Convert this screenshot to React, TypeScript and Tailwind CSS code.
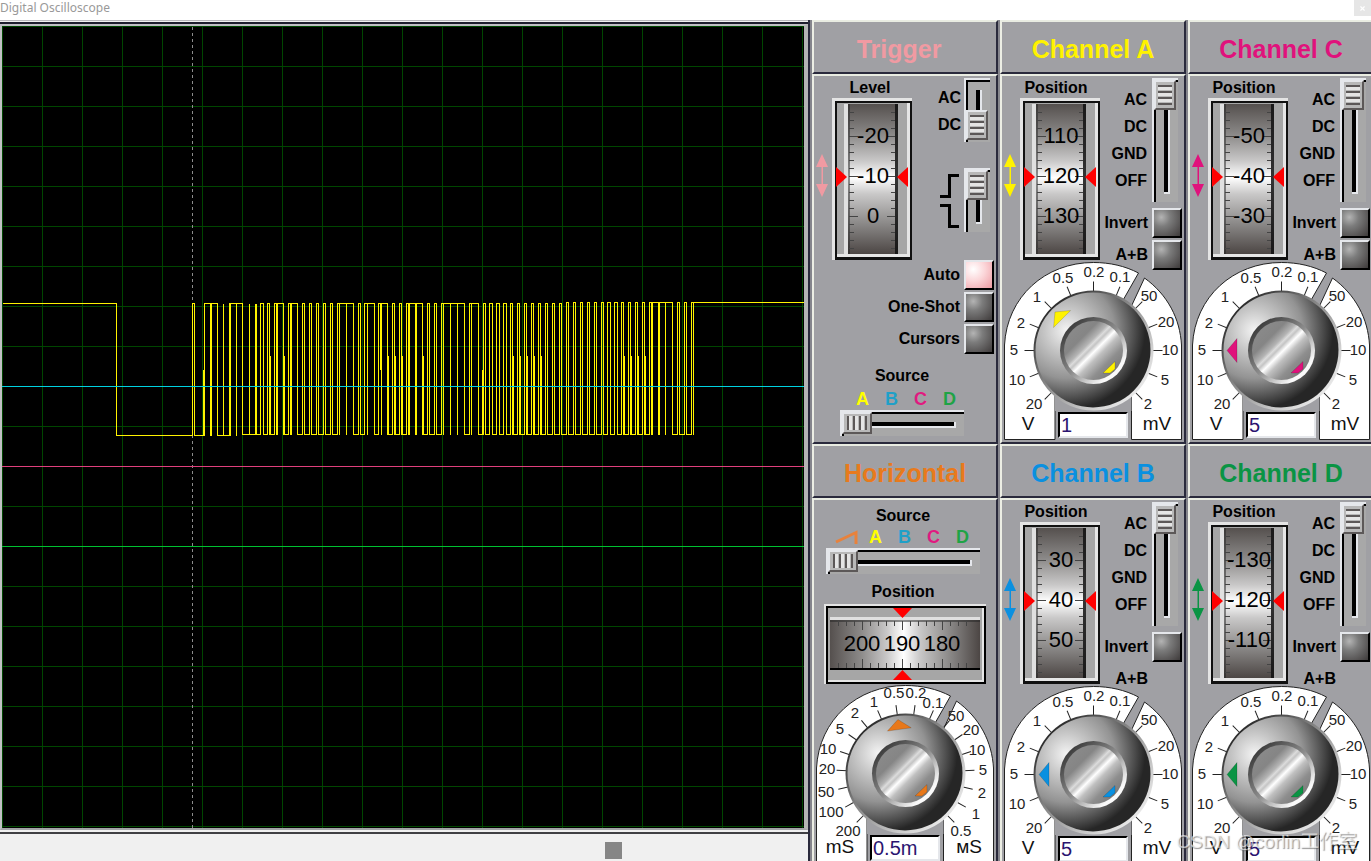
import { useState } from 'react';
import { X } from 'lucide-react';

const font = "font-['Liberation_Sans',Arial,sans-serif]";

/* ---------- Screen ---------- */

// high sections of the channel A trace, [from, to]
const PULSES: [number, number][] = [
  [192, 194], [204, 217], [229, 242], [260, 263], [267, 269], [274, 283], [288, 297],
  [302, 304], [309, 311], [316, 318], [323, 325], [330, 332], [337, 353], [358, 360],
  [364, 374], [378, 387], [392, 394], [399, 401], [406, 422], [427, 429], [434, 436],
  [441, 464], [469, 478], [483, 485], [489, 492], [496, 499], [503, 506], [510, 512],
  [517, 519], [524, 526], [531, 533], [538, 540], [545, 547], [552, 554], [559, 561],
  [566, 568], [573, 575], [580, 582], [587, 589], [594, 596], [601, 603], [607, 610],
  [614, 617], [621, 623], [628, 630], [635, 637], [642, 644], [649, 672], [677, 679],
  [684, 686], [691, 804],
];
const EDGES = [
  210, 211, 223, 230, 236, 249, 255, 256, 276, 277, 290, 291, 339, 346, 367, 381, 408, 409,
  415, 416, 443, 450, 457, 471, 651, 652, 658, 659, 665, 693,
];
const SPIKES = [270, 284, 388, 395, 402, 423, 513, 520, 527, 534, 541, 624, 631, 638, 645];

const high = (x: number) => (x < 561 ? 303 : 302);
const low = (x: number) => (x < 242 ? 435 : 434);

const TRACE = [
  'M2 303H116V435',
  ...PULSES.map(([a, b]) => `H${a}V${high(a)}H${b}${b < 804 ? `V${low(b)}` : ''}`),
  ...EDGES.map((x) => `M${x} ${high(x)}V${low(x)}`),
  ...SPIKES.map((x) => `M${x} 355V434`),
  'M203 369V435M380 303V369M482 369V434',
].join('');

const GRID = Array.from({ length: 21 }, (_, i) => i * 40);

function Screen() {
  return (
    <svg viewBox="1.5 25.5 802 802" className="block w-full bg-black" shapeRendering="crispEdges" fill="none">
      <g stroke="#004600">
        {GRID.map((n) => (
          <path key={n} d={`M${n + 2} 25V829M1 ${n + 26}H805`} />
        ))}
      </g>
      <path d="M192 26V828" stroke="#8c8c8c" strokeDasharray="3 3" />
      <path d={TRACE} stroke="#fff200" />
      <path d="M1 386H805" stroke="#00d2e0" />
      <path d="M1 466H805" stroke="#e0407c" />
      <path d="M1 546H805" stroke="#00c030" />
    </svg>
  );
}

/* ---------- Shared gradients ---------- */

function Gradients() {
  const wheel = (
    <>
      <stop offset="0" stopColor="#55504e" />
      <stop offset="0.2" stopColor="#8a8887" />
      <stop offset="0.38" stopColor="#c9c8c8" />
      <stop offset="0.49" stopColor="#ffffff" />
      <stop offset="0.6" stopColor="#c9c8c8" />
      <stop offset="0.8" stopColor="#8a8887" />
      <stop offset="1" stopColor="#4c4644" />
    </>
  );
  return (
    <svg width="0" height="0" className="absolute" aria-hidden="true">
      <defs>
        <linearGradient id="wheelV" x1="0" y1="0" x2="0" y2="1">{wheel}</linearGradient>
        <linearGradient id="wheelH" x1="0" y1="0" x2="1" y2="0">{wheel}</linearGradient>
        <linearGradient id="rim" x1="0.1" y1="0.1" x2="0.9" y2="0.9">
          <stop offset="0" stopColor="#1c1c1c" />
          <stop offset="0.35" stopColor="#777" />
          <stop offset="0.75" stopColor="#c8c8c8" />
          <stop offset="1" stopColor="#f2f2f2" />
        </linearGradient>
        <radialGradient id="body" cx="0.27" cy="0.33" r="0.76">
          <stop offset="0" stopColor="#f4f4f4" />
          <stop offset="0.25" stopColor="#c6c6c6" />
          <stop offset="0.55" stopColor="#939393" />
          <stop offset="0.78" stopColor="#4c4c4c" />
          <stop offset="0.9" stopColor="#262626" />
        </radialGradient>
        <linearGradient id="ring" x1="0.12" y1="0.12" x2="0.88" y2="0.88">
          <stop offset="0" stopColor="#383838" />
          <stop offset="0.5" stopColor="#8c8c8c" />
          <stop offset="0.9" stopColor="#fafafa" />
        </linearGradient>
        <linearGradient id="face" x1="0.12" y1="0.14" x2="0.86" y2="0.88">
          <stop offset="0" stopColor="#8a8a8a" />
          <stop offset="0.22" stopColor="#858585" />
          <stop offset="0.36" stopColor="#b4b4b4" />
          <stop offset="0.41" stopColor="#dcdcdc" />
          <stop offset="0.45" stopColor="#c4c4c4" />
          <stop offset="0.52" stopColor="#ffffff" />
          <stop offset="0.62" stopColor="#c0c0c0" />
          <stop offset="0.8" stopColor="#8e8e8e" />
          <stop offset="1" stopColor="#7a7a7a" />
        </linearGradient>
      </defs>
    </svg>
  );
}

/* ---------- Wheels ---------- */

function VerticalWheel({ values }: { values: string[] }) {
  const ticks = Array.from({ length: 18 }, (_, i) => 14 + i * 8);
  return (
    <svg width="80" height="162" viewBox="0 0 80 162" className={`block font-normal ${font}`}>
      <rect width="80" height="162" fill="#e4e4e4" />
      <path d="M3 162V3H80V162Z" fill="#111" />
      <path d="M5 5H78V159H5Z" fill="#e6e6e6" />
      <path d="M5 5H75V156H5Z" fill="#a6a6a6" />
      <rect x="12" y="6" width="4" height="150" fill="#e0e0e0" />
      <rect x="16" y="6" width="50" height="150" fill="url(#wheelV)" />
      <rect x="16" y="6" width="2" height="150" fill="#222" opacity="0.5" />
      <rect x="63" y="6" width="3" height="150" fill="#111" opacity="0.85" />
      <path
        d={ticks.map((y) => ((y - 38) % 40 === 0 ? `M17 ${y}.5H26M55 ${y}.5H63` : `M17 ${y}.5H22M59 ${y}.5H63`)).join('')}
        stroke="#444"
        strokeWidth="1"
      />
      <path d="M4 69L15 79L4 89Z" fill="#f00" />
      <path d="M76 69L65 79L76 89Z" fill="#f00" />
      {values.map((v, i) => (
        <text key={v} x="41" y={45 + i * 40} textAnchor="middle" fontSize="22">{v}</text>
      ))}
    </svg>
  );
}

function HorizontalWheel({ values }: { values: string[] }) {
  const ticks = Array.from({ length: 17 }, (_, i) => 14 + i * 8);
  return (
    <svg width="162" height="80" viewBox="0 0 162 80" className={`ml-[10px] block font-normal ${font}`}>
      <rect width="162" height="80" fill="#e4e4e4" />
      <path d="M2 2H162V80H2Z" fill="#000" />
      <path d="M4 4H160V78H4Z" fill="#e6e6e6" />
      <path d="M4 4H158V76H4Z" fill="#a6a6a6" />
      <rect x="6" y="13" width="150" height="3" fill="#e0e0e0" />
      <rect x="6" y="16" width="150" height="48" fill="url(#wheelH)" />
      <rect x="6" y="16" width="150" height="2" fill="#222" opacity="0.5" />
      <rect x="6" y="64" width="150" height="2" fill="#000" />
      <path
        d={ticks.map((x) => ((x - 38) % 40 === 0 ? `M${x}.5 17V26M${x}.5 55V64` : `M${x}.5 17V22M${x}.5 59V64`)).join('')}
        stroke="#444"
      />
      <path d="M69 4H88L78.500 14Z" fill="#f00" />
      <path d="M69 76H88L78.500 66Z" fill="#f00" />
      {values.map((v, i) => (
        <text key={v} x={38 + i * 40} y="47" textAnchor="middle" fontSize="22">{v}</text>
      ))}
    </svg>
  );
}

/* ---------- Rotary knob ---------- */

interface Mark {
  text: string;
  x: number;
  y: number;
}

const VOLT_MARKS: Mark[] = [
  { text: '20', x: 31, y: 143 }, { text: '10', x: 14, y: 119 }, { text: '5', x: 11, y: 89 },
  { text: '2', x: 18, y: 62 }, { text: '1', x: 34, y: 36 }, { text: '0.5', x: 60, y: 17 },
  { text: '0.2', x: 91, y: 11 }, { text: '0.1', x: 117, y: 16 }, { text: '50', x: 146, y: 35 },
  { text: '20', x: 163, y: 61 }, { text: '10', x: 167, y: 89 }, { text: '5', x: 162, y: 119 },
  { text: '2', x: 145, y: 143 },
];

const TIME_MARKS: Mark[] = [
  { text: '200', x: 33, y: 147 }, { text: '100', x: 16, y: 128 }, { text: '50', x: 11, y: 108 },
  { text: '20', x: 12, y: 85 }, { text: '10', x: 13, y: 65 }, { text: '5', x: 25, y: 45 },
  { text: '2', x: 40, y: 29 }, { text: '1', x: 59, y: 18 }, { text: '0.5', x: 79, y: 9 },
  { text: '0.2', x: 101, y: 9 }, { text: '0.1', x: 118, y: 19 }, { text: '50', x: 141, y: 32 },
  { text: '20', x: 156, y: 46 }, { text: '10', x: 162, y: 66 }, { text: '5', x: 168, y: 86 },
  { text: '2', x: 167, y: 109 }, { text: '1', x: 161, y: 130 }, { text: '0.5', x: 146, y: 147 },
];

interface KnobProps {
  label: string;
  marks: Mark[];
  units: [string, string];
  angle: number;
  color: string;
  value: string;
}

function Knob({ label, marks, units, angle, color, value }: KnobProps) {
  const [text, setText] = useState(value);
  const steps = marks.length === 13 ? 12 : marks.length - 1;
  return (
    <div className="relative ml-px h-[180px] w-[180px] font-normal">
      <svg width="180" height="180" viewBox="0 0 180 180" className={`block ${font}`}>
        <path
          d="M1.500 178.500V84C4 36 42 1.500 90.500 1.500C107 1.500 122 5 135.500 12L119 41L128 46L141.500 17C165 34 177 58 178.500 84V178.500H128.500V120H52V178.500Z"
          fill="#fff"
          stroke="#222"
        />
        {marks.map((m, i) => (
          <path key={i} d="M58 0H69" stroke="#222" transform={`translate(90.500 89.500) rotate(${135 + (i * 270) / steps})`} />
        ))}
        <path d="M52 120H128.500V150H52Z" fill="#a0a0a4" />
        <circle cx="90.500" cy="89.500" r="60" fill="url(#rim)" />
        <circle cx="90" cy="89" r="57.500" fill="url(#body)" />
        <circle cx="90.500" cy="89.500" r="33.500" fill="url(#ring)" />
        <circle cx="90.500" cy="89.500" r="29.500" fill="url(#face)" />
        <g fill={color} stroke="#000" strokeOpacity="0.3" strokeWidth="0.500">
          <path d="M54.500 0L44.500 -12V12Z" transform={`translate(90.500 89.500) rotate(${angle})`} />
          <path d="M100 112L112 100.500V108L107 112Z" />
        </g>
        <g fontSize="15" fill="#222" textAnchor="middle">
          {marks.map((m, i) => (
            <text key={i} x={m.x} y={m.y + 5}>{m.text}</text>
          ))}
        </g>
        <g fontSize="19" fill="#111" textAnchor="middle">
          <text x="25" y="169">{units[0]}</text>
          <text x="154" y="169">{units[1]}</text>
        </g>
      </svg>
      <input
        type="text"
        aria-label={label}
        value={text}
        onChange={(e) => setText(e.target.value)}
        className="absolute top-[151px] left-[55px] h-[26px] w-[70px] border-t-2 border-r-2 border-b-2 border-l-2 border-t-black border-r-gray-200 border-b-gray-200 border-l-black bg-white pl-px text-[20px] leading-5 text-[#2b1470] outline-none"
      />
    </div>
  );
}

/* ---------- Switches and buttons ---------- */

interface SliderProps {
  label: string;
  max: number;
  start?: number;
  size: string;
}

function VerticalSlider({ label, max, start = 0, size }: SliderProps) {
  const [value, setValue] = useState(start);
  return (
    <div className={`relative w-[26px] shrink-0 border-t-2 border-l-2 border-gray-200 bg-[#a8a8a8] shadow-[inset_2px_2px_0_#000] ${size}`}>
      <span className="absolute top-[10px] bottom-2 left-[10px] w-[6px] border-r-2 border-b-2 border-gray-200 bg-black" />
      <input
        type="range"
        aria-label={label}
        min={0}
        max={max}
        value={value}
        onChange={(e) => setValue(Number(e.target.value))}
        className="absolute top-0 bottom-[2px] left-0 m-0 w-[22px] appearance-none bg-transparent outline-none [writing-mode:vertical-lr] [&::-webkit-slider-thumb]:h-[30px] [&::-webkit-slider-thumb]:w-[22px] [&::-webkit-slider-thumb]:appearance-none [&::-webkit-slider-thumb]:border-2 [&::-webkit-slider-thumb]:border-t-gray-200 [&::-webkit-slider-thumb]:border-r-[#5c5858] [&::-webkit-slider-thumb]:border-b-[#5c5858] [&::-webkit-slider-thumb]:border-l-gray-200 [&::-webkit-slider-thumb]:bg-[#b8b8b8] [&::-webkit-slider-thumb]:bg-[repeating-linear-gradient(180deg,#5c5858_0_2px,#e5e5e5_2px_5px,#b8b8b8_5px_6px)] [&::-webkit-slider-thumb]:bg-[length:14px_20px] [&::-webkit-slider-thumb]:bg-center [&::-webkit-slider-thumb]:bg-no-repeat"
      />
    </div>
  );
}

function HorizontalSlider({ label, max, start = 0, size }: SliderProps) {
  const [value, setValue] = useState(start);
  return (
    <div className={`relative h-[26px] border-t-2 border-l-2 border-gray-200 bg-[#a8a8a8] shadow-[inset_2px_2px_0_#000] ${size}`}>
      <span className="absolute top-[10px] right-2 left-[10px] h-[6px] border-r-2 border-b-2 border-gray-200 bg-black" />
      <input
        type="range"
        aria-label={label}
        min={0}
        max={max}
        value={value}
        onChange={(e) => setValue(Number(e.target.value))}
        className="absolute top-0 left-0 m-0 h-[22px] w-full appearance-none bg-transparent outline-none [&::-webkit-slider-thumb]:h-[22px] [&::-webkit-slider-thumb]:w-[30px] [&::-webkit-slider-thumb]:appearance-none [&::-webkit-slider-thumb]:border-2 [&::-webkit-slider-thumb]:border-t-gray-200 [&::-webkit-slider-thumb]:border-r-[#5c5858] [&::-webkit-slider-thumb]:border-b-[#5c5858] [&::-webkit-slider-thumb]:border-l-gray-200 [&::-webkit-slider-thumb]:bg-[#b8b8b8] [&::-webkit-slider-thumb]:bg-[repeating-linear-gradient(90deg,#5c5858_0_2px,#e5e5e5_2px_5px,#b8b8b8_5px_6px)] [&::-webkit-slider-thumb]:bg-[length:20px_14px] [&::-webkit-slider-thumb]:bg-center [&::-webkit-slider-thumb]:bg-no-repeat"
      />
    </div>
  );
}

function LampButton({ id, label, lit = false }: { id: string; label: string; lit?: boolean }) {
  const [on, setOn] = useState(lit);
  return (
    <div className="flex items-center gap-1">
      <label htmlFor={id}>{label}</label>
      <button
        id={id}
        type="button"
        aria-pressed={on}
        onClick={() => setOn(!on)}
        className={`h-[30px] w-[30px] border-2 border-t-gray-200 border-r-black border-b-black border-l-gray-200 ${
          on
            ? 'bg-[radial-gradient(circle_at_28%_28%,#fff,#fbd5d8_45%,#ee9aa2)]'
            : 'bg-[radial-gradient(circle_at_28%_28%,#b4b4b4,#7c7c7c_35%,#3e3a3a)]'
        }`}
      />
    </div>
  );
}

function UpDownArrow({ color }: { color: string }) {
  return (
    <svg width="14" height="44" viewBox="0 0 14 44" className="mt-[76px] mr-1 block shrink-0" fill={color}>
      <path d="M8 0L14 13H2ZM8 43L2 30H14ZM7.500 12H9V31H7.500Z" />
    </svg>
  );
}

function SourceLetters() {
  return (
    <>
      <span className="w-[29px] text-center text-[#ffff00]">A</span>
      <span className="w-[29px] text-center text-[#1fa0c8]">B</span>
      <span className="w-[29px] text-center text-[#e01a80]">C</span>
      <span className="w-[29px] text-center text-[#1fa346]">D</span>
    </>
  );
}

/* ---------- Panels ---------- */

interface PanelProps {
  title: string;
  color: string;
  children: React.ReactNode;
}

const frame = 'border-2 border-t-[#e9ece2] border-r-[#2a2a3c] border-b-[#2a2a3c] border-l-[#eceee4] bg-[#a0a0a4]';

function Panel({ title, color, children }: PanelProps) {
  return (
    <section className="pl-[2px]">
      <h2 className={`flex h-[54px] items-center justify-center pt-1 text-[25px] leading-8 font-bold ${frame} ${color}`}>{title}</h2>
      <div className={`h-[370px] text-[16px] leading-5 font-bold text-black ${frame}`}>{children}</div>
    </section>
  );
}

function TriggerPanel() {
  return (
    <Panel title="Trigger" color="pr-3 text-[#f09aa2]">
      <div className="flex items-start pt-[2px]">
        <UpDownArrow color="#f09aa2" />
        <div>
          <p className="pr-1 text-center">Level</p>
          <VerticalWheel values={['-20', '-10', '0']} />
        </div>
        <div className="flex flex-1 flex-col items-end gap-[26px] pr-[6px]">
          <div className="flex gap-[3px]">
            <div className="pt-[6px] text-right leading-[27px]">
              <p>AC</p>
              <p>DC</p>
            </div>
            <VerticalSlider label="Trigger coupling" max={1} start={1} size="h-16" />
          </div>
          <div className="flex items-center gap-[5px]">
            <svg width="19" height="56" viewBox="0 0 19 56" fill="none" stroke="#000" strokeWidth="3">
              <path d="M0 24.500H9.500V3.500H19M0 33.500H9.500V54.500H19" />
            </svg>
            <VerticalSlider label="Trigger edge" max={1} size="h-16" />
          </div>
        </div>
      </div>
      <div className="flex flex-col items-end gap-[2px] pr-[2px]">
        <LampButton id="auto" label="Auto" lit />
        <LampButton id="one-shot" label="One-Shot" />
        <LampButton id="cursors" label="Cursors" />
      </div>
      <div className="mt-3 ml-[26px] w-[124px]">
        <p className="text-center">Source</p>
        <div className="flex pt-[2px] pl-2 text-[18px] leading-[22px]">
          <SourceLetters />
        </div>
        <HorizontalSlider label="Trigger source" max={3} size="w-full" />
      </div>
    </Panel>
  );
}

function HorizontalPanel() {
  return (
    <Panel title="Horizontal" color="text-[#e87a1c]">
      <div className="ml-3 w-[154px] pt-[6px]">
        <p className="text-center">Source</p>
        <div className="flex items-center pl-[6px] text-[18px] leading-[22px]">
          <svg width="29" height="14" viewBox="0 0 29 14" fill="none" stroke="#e8823c" strokeWidth="3">
            <path d="M4 12L24 2.500V14" />
          </svg>
          <SourceLetters />
        </div>
        <HorizontalSlider label="Horizontal source" max={4} size="w-full" />
        <p className="mt-2 mb-[2px] text-center">Position</p>
      </div>
      <HorizontalWheel values={['200', '190', '180']} />
      <Knob label="Time per division" marks={TIME_MARKS} units={['mS', 'мS']} angle={262} color="#e8781a" value="0.5m" />
    </Panel>
  );
}

interface ChannelProps {
  name: string;
  title: string;
  ink: string;
  values: string[];
  angle: number;
  gain: string;
  sum?: boolean;
}

function ChannelPanel({ name, title, ink, values, angle, gain, sum = false }: ChannelProps) {
  return (
    <Panel title={`Channel ${name}`} color={title}>
      <div className="flex items-start pt-[2px]">
        <UpDownArrow color={ink} />
        <div>
          <p className="pr-2 text-center">Position</p>
          <VerticalWheel values={values} />
        </div>
        <div className="flex flex-1 flex-col items-end pr-[2px]">
          <div className="mr-1 mb-[6px] flex gap-[5px]">
            <div className="pt-2 text-right leading-[27px]">
              <p>AC</p>
              <p>DC</p>
              <p>GND</p>
              <p>OFF</p>
            </div>
            <VerticalSlider label={`Channel ${name} coupling`} max={3} size="h-[124px]" />
          </div>
          <LampButton id={`invert-${name}`} label="Invert" />
          <div className="mt-[2px] flex h-[30px] items-center">
            {sum ? <LampButton id={`sum-${name}`} label="A+B" /> : <span className="pr-[34px]">A+B</span>}
          </div>
        </div>
      </div>
      <div className="-mt-[9px]">
        <Knob label={`Channel ${name} gain`} marks={VOLT_MARKS} units={['V', 'mV']} angle={angle} color={ink} value={gain} />
      </div>
    </Panel>
  );
}

export default function App() {
  return (
    <div className={`relative flex h-screen flex-col overflow-hidden bg-white ${font}`}>
      <Gradients />
      <header className="flex h-5 shrink-0 items-start justify-between">
        <h1 className="font-['Noto_Sans',sans-serif] text-[12px] leading-4 text-[#999]">Digital Oscilloscope</h1>
        <button type="button" aria-label="Close" className="flex h-4 w-[17px] items-center justify-center bg-[#e6e6e6] text-white">
          <X size={7} strokeWidth={4} />
        </button>
      </header>

      <main className="flex min-h-0 flex-1">
        <div className="flex min-w-0 flex-1 flex-col border-r-2 border-[#2a2a3c] bg-[#f0f0f0]">
          <div className="border-t border-[#b8b8bc] pt-px">
            <div className="border-t-2 border-b-2 border-t-[#1e1e2e] border-b-[#404044] pb-[2px]">
              <div className="border-2 border-r-4 border-t-[#c0c0c4] border-r-[#b4b4b4] border-b-[#a4a4a8] border-l-[#c0c0c4]">
                <Screen />
              </div>
            </div>
          </div>
          <div className="mt-2 ml-[605px] h-[17px] w-[17px] bg-[#868686]" />
        </div>

        <aside className="w-[561px] shrink-0 overflow-hidden bg-[#85858c]">
          <div className="grid w-[564px] grid-cols-3">
            <TriggerPanel />
            <ChannelPanel name="A" title="text-[#fff200]" ink="#fff200" values={['110', '120', '130']} angle={225} gain="1" sum />
            <ChannelPanel name="C" title="text-[#e0127c]" ink="#e0127c" values={['-50', '-40', '-30']} angle={180} gain="5" sum />
            <HorizontalPanel />
            <ChannelPanel name="B" title="text-[#0a90e0]" ink="#0a90e0" values={['30', '40', '50']} angle={180} gain="5" />
            <ChannelPanel name="D" title="text-[#0a9444]" ink="#0a9444" values={['-130', '-120', '-110']} angle={180} gain="5" />
          </div>
        </aside>
      </main>

      <p className="pointer-events-none absolute right-[14px] bottom-[5px] font-['Liberation_Sans','Noto_Sans_CJK_SC',sans-serif] text-[19px] leading-7 text-white/60 [text-shadow:1px_1px_1px_rgba(80,80,80,0.6)]">
        CSDN @corlin工作室
      </p>
    </div>
  );
}
